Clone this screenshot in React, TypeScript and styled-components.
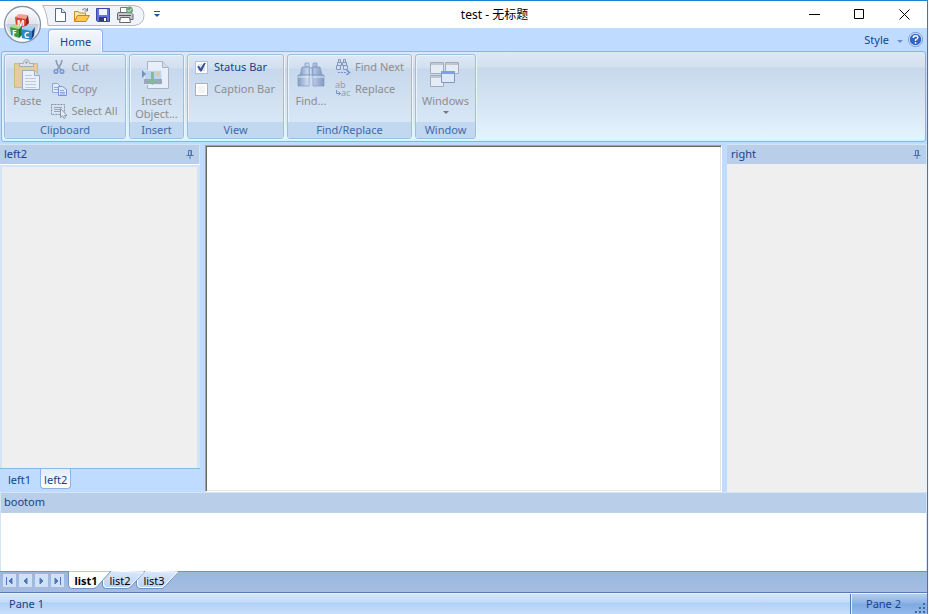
import React from "react";
import styled, { createGlobalStyle, css } from "styled-components";

const navy = "#15428b";
const sky = "#bfdbff";

const GlobalStyle = createGlobalStyle`
  * { box-sizing: border-box; }
  body { margin: 0; }
  body, button, input {
    font-family: "Noto Sans", "Open Sans", "Noto Sans CJK SC", sans-serif;
    font-size: 11px;
    line-height: 14px;
  }
  button { padding: 0; margin: 0; border: 0; background: none; color: inherit; }
  svg { display: block; flex: none; }
`;

const Desktop = styled.div`
  min-height: 100vh;
  display: flex;
  padding-right: 1px;
  background: #f4f7fb;
`;
const Window = styled.div`
  position: relative;
  flex: 1;
  min-width: 0;
  display: flex;
  flex-direction: column;
  border-top: 1px solid #1883d7;
  border-right: 1px solid #1883d7;
  background: ${sky};
  color: ${navy};
`;
const TitleBar = styled.header`
  height: 27px;
  display: grid;
  grid-template-columns: 1fr auto 1fr;
  align-items: center;
  background: #fff;
`;
const Title = styled.h1`
  margin: 0;
  padding-left: 62px;
  font-size: 12px;
  font-weight: 400;
  line-height: 26px;
  color: #000;
`;
const OfficeButton = styled.button`
  position: absolute;
  z-index: 2;
  left: 3px;
  top: 4px;
`;
const QuickAccess = styled.div`
  display: flex;
  align-items: center;
  align-self: start;
  gap: 7px;
  padding-left: 42px;
`;
const QuickBar = styled.div`
  position: relative;
  display: flex;
  align-items: center;
  gap: 5px;
  width: 104px;
  height: 24px;
  margin-top: 2px;
  padding-left: 10px;
`;
const BarShape = styled.svg`
  position: absolute;
  left: 0;
  top: 0;
`;
const IconButton = styled.button`
  position: relative;
  display: flex;
  align-items: center;
  justify-content: center;
`;
const WindowControls = styled.div`
  justify-self: end;
  display: flex;
`;
const WindowButton = styled.button`
  width: 45px;
  height: 27px;
  display: grid;
  place-items: center;
`;
const TabStrip = styled.nav`
  height: 23px;
  display: flex;
  align-items: end;
  justify-content: space-between;
  padding: 0 4px 0 48px;
`;
const RibbonTab = styled.button`
  position: relative;
  z-index: 1;
  height: 23px;
  margin-bottom: -1px;
  padding: 1px 11px 0;
  border: 1px solid #8db2e3;
  border-bottom: 0;
  border-radius: 4px 4px 0 0;
  background: linear-gradient(#f4f8fe, #dfe9f5);
  box-shadow: inset 1px 1px #fff, inset -1px 0 #fff;
  color: ${navy};
  font-size: 11px;
`;
const StyleArea = styled.div`
  display: flex;
  align-items: center;
  align-self: center;
  gap: 5px;
`;
const StyleButton = styled.button`
  display: flex;
  align-items: center;
  gap: 7px;
  color: ${navy};
`;
const Ribbon = styled.section`
  display: flex;
  gap: 3px;
  height: 91px;
  margin: 0 1px;
  padding: 2px 2px 2px;
  border: 1px solid #8db2e3;
  border-radius: 3px;
  background: linear-gradient(#dee8f5 0, #d3e0ef 15px, #c7d8ed 16px, #d8e7f5 58px, #e4f5ff 88px);
  box-shadow: inset 0 -2px #c9f8ff, inset 1px 0 #d9f3ff;
`;
const Group = styled.section`
  display: flex;
  flex-direction: column;
  flex: 0 0 auto;
  width: ${(p: { $w: number }) => p.$w}px;
  border: 1px solid #9ebfdb;
  border-radius: 3px;
  background: linear-gradient(#dee8f5 0, #d1dfef 13px, #c7d8ed 14px, #d8e7f5 68px);
  box-shadow: inset 1px 1px #eaf2fa, 1px 1px #eaf5fc;
  overflow: hidden;
`;
const GroupBody = styled.div<{ $gap?: number }>`
  display: flex;
  flex: 1;
  justify-content: center;
  gap: ${(p) => p.$gap ?? 0}px;
  padding-top: 1px;
`;
const GroupName = styled.h2`
  margin: 0;
  height: 16px;
  background: #c1d8f0;
  color: #3e6aaa;
  font-size: 11px;
  font-weight: 400;
  line-height: 16px;
  text-align: center;
`;
const LargeButton = styled.button`
  display: flex;
  flex-direction: column;
  align-items: center;
  padding-top: 3px;
  color: #8d8d8d;
  line-height: 13px;
  svg { margin-bottom: 3px; }
`;
const Stack = styled.div`
  display: flex;
  flex-direction: column;
`;
const SmallButton = styled.button`
  display: flex;
  align-items: center;
  gap: 4px;
  height: 22px;
  color: #8d8d8d;
  white-space: nowrap;
`;
const CheckLabel = styled.label<{ $off?: boolean }>`
  display: flex;
  align-items: center;
  gap: 6px;
  height: 22px;
  padding-right: 1px;
  color: ${(p) => (p.$off ? "#8d8d8d" : navy)};
`;
const CheckBox = styled.input`
  appearance: none;
  width: 13px;
  height: 13px;
  margin: 0;
  border: 1px solid #abc1de;
  background: #dfe3e9;
  box-shadow: inset 0 0 0 2px #fff;
  display: grid;
  place-items: center;
  &:disabled { border-color: #aeb1b5; background: #f4f4f4; }
  &:checked::before {
    content: "";
    width: 9px;
    height: 9px;
    background: #33558f;
    clip-path: polygon(0 45%, 22% 38%, 40% 65%, 80% 0, 100% 0, 50% 100%, 35% 100%);
  }
`;
const Workspace = styled.main`
  flex: 1;
  display: grid;
  grid-template-columns: 200px minmax(0, 1fr) 200px;
  column-gap: 5px;
  padding-top: 2px;
`;
const Pane = styled.section`
  display: flex;
  flex-direction: column;
  min-width: 0;
`;
const PaneHeader = styled.header`
  display: flex;
  align-items: center;
  justify-content: space-between;
  height: 20px;
  padding: 0 5px 1px 4px;
  border-top: 1px solid #d5e4f2;
  border-right: 1px solid #d5e4f2;
  background: #b8cee9;
`;
const BottomHeader = styled(PaneHeader)`
  height: 21px;
  padding: 0 3px 2px;
`;
const PaneName = styled.h2`
  margin: 0;
  font-size: 11px;
  font-weight: 400;
  line-height: 16px;
`;
const PaneBody = styled.div<{ $framed?: boolean }>`
  flex: 1;
  background: #efefef;
  ${(p) =>
    p.$framed &&
    css`
      border: solid #d5e4f2;
      border-width: 2px 2px 0 2px;
      margin-top: 1px;
      box-shadow: 0 -1px #fff, inset -1px 0 #d5e4f2;
    `}
`;
const PaneTabs = styled.nav`
  display: flex;
  height: 24px;
  padding: 0 4px;
  gap: 5px;
  border-top: 1px solid #8db9de;
`;
const PaneTab = styled.button<{ $active?: boolean }>`
  height: 20px;
  padding: 2px 4px 0;
  color: ${navy};
  ${(p) =>
    p.$active &&
    css`
      padding: 2px 3px 0;
      border: 1px solid #8db2e3;
      border-top: 0;
      border-radius: 0 0 4px 4px;
      background: linear-gradient(#e0edfb, #fff);
    `}
`;
const Client = styled.div`
  border: 1px solid;
  border-color: #a0a0a0 #fff #fff #a0a0a0;
  box-shadow: inset 1px 1px #696969, inset -1px -1px #e3e3e3;
  background: #fff;
  margin-top: 1px;
`;
const BottomPane = styled.section`
  border-left: 1px solid #d5e4f2;
`;
const Output = styled.div`
  height: 58px;
  background: #fff;
  border-right: 1px solid #d5e4f2;
`;
const SheetBar = styled.nav`
  display: flex;
  height: 22px;
  border-top: 1px solid #6f93c5;
  border-bottom: 1px solid #567db1;
  background: linear-gradient(#9bb7df, #a6bde0);
`;
const SheetNav = styled.div`
  display: flex;
  gap: 3px;
  padding: 2px 4px 0 3px;
`;
const NavButton = styled.button`
  display: grid;
  place-items: center;
  width: 13px;
  height: 13px;
  background: #cfe1f6;
`;
const SheetTab = styled.button<{ $order: number }>`
  position: relative;
  z-index: ${(p) => p.$order};
  width: 34px;
  height: 17px;
  padding-left: 2px;
  color: #000;
  font-weight: ${(p) => (p.$order === 3 ? 700 : 400)};
  line-height: 17px;
  white-space: nowrap;
`;
const SheetShape = styled.svg`
  position: absolute;
  left: 0;
  top: -1px;
`;
const SheetText = styled.span`
  position: relative;
`;
const StatusBar = styled.footer`
  position: relative;
  display: flex;
  height: 21px;
  border-top: 1px solid #e6f1ff;
  background: linear-gradient(#d7e6f9, #c4dbf8 8px, #b1cff7 9px, #c8dffb);
  line-height: 20px;
`;
const StatusText = styled.div`
  flex: 1;
  padding-left: 9px;
`;
const StatusEnd = styled.div`
  width: 77px;
  padding-left: 15px;
  border-left: 1px solid #567db1;
  box-shadow: inset 1px 0 #e1eefc;
  background: linear-gradient(#b4cdf0, #8db2e6 9px, #7fa9e2 10px, #94b9ec);
`;
const Grip = styled.svg`
  position: absolute;
  right: 0;
  bottom: 0;
`;

const Arrow = ({ fill = "#6b8fc5", bar = false }: { fill?: string; bar?: boolean }) => (
  <svg width="7" height="8" viewBox="0 0 7 8">
    {bar && <path d="M1 1.500h6" stroke={fill} />}
    <path d="M1 4h6L4 7z" fill={fill} />
  </svg>
);

const OfficeIcon = () => (
  <svg width="39" height="39" viewBox="0 0 39 39">
    <defs>
      <linearGradient id="orb" x2="0" y2="1">
        <stop stopColor="#fff" /><stop offset=".48" stopColor="#dfe4ec" />
        <stop offset=".5" stopColor="#c3ccd9" /><stop offset="1" stopColor="#fff" />
      </linearGradient>
    </defs>
    <circle cx="19.500" cy="19.500" r="18" fill="url(#orb)" stroke="#8694ac" strokeWidth="1.300" />
    <circle cx="19.500" cy="19.500" r="16.500" fill="none" stroke="#fff" strokeOpacity=".8" />
    <path d="M12 12l4-3 9 1-2 4z" fill="#f2a090" />
    <path d="M12 12l11 2-1 8-9-1z" fill="#d2452f" />
    <path d="M23 14l2-4 1 8-4 4z" fill="#94211a" />
    <path d="M7 22l4-3 8 2-3 3z" fill="#a9dd94" />
    <path d="M7 22l9 2v9l-8-3z" fill="#3c9c42" />
    <path d="M16 24l3-3v9l-3 3z" fill="#1c6f2b" />
    <path d="M18 24l4-3 10 1-3 4z" fill="#9bd2f4" />
    <path d="M18 24l11 2-1 9-9-2z" fill="#2d87c8" />
    <path d="M29 26l3-4-1 9-3 4z" fill="#153f86" />
    <g fill="#fff" fontFamily="Noto Sans" fontWeight="700" fontSize="8">
      <text x="14" y="21">M</text><text x="9" y="31">F</text><text x="21" y="33">C</text>
    </g>
  </svg>
);

const NewIcon = () => (
  <svg width="16" height="16" viewBox="0 0 16 16">
    <path d="M3.500 1.500h6l4 4v9h-10z" fill="#fff" stroke="#53698f" />
    <path d="M9.500 1.500v4h4" fill="#dce6f5" stroke="#53698f" />
  </svg>
);
const OpenIcon = () => (
  <svg width="17" height="16" viewBox="0 0 17 16">
    <path d="M1.500 14V4.500h4l1 1.500h6v3" fill="#ffe79b" stroke="#c88c2a" />
    <path d="M1.500 14.500l3-6h12l-3.500 6z" fill="#ffc951" stroke="#c4862a" />
    <path d="M9 3q3-3 5 0M14.500 1v3h-3" fill="none" stroke="#6b7c99" />
  </svg>
);
const SaveIcon = () => (
  <svg width="16" height="16" viewBox="0 0 16 16">
    <path d="M1.500 1.500h13v13h-12l-1-1z" fill="#6672dc" stroke="#3d45a5" />
    <path d="M4 2h8v6H4z" fill="#eef3ff" />
    <path d="M4 10h8v4H4z" fill="#34396f" />
    <path d="M9 11h2v3H9z" fill="#fff" />
  </svg>
);
const PrintIcon = () => (
  <svg width="18" height="18" viewBox="0 0 18 18">
    <path d="M4.500 7V1.500h8V7" fill="#fff" stroke="#777" />
    <path d="M2 6.500h13l2 2v5H1.500V8z" fill="#c4c6cb" stroke="#6b6b70" />
    <path d="M4.500 11.500h9l1 5h-11z" fill="#fff" stroke="#666" />
    <path d="M3 9.500h12" stroke="#55585e" />
    <circle cx="13.500" cy="4" r="3.500" fill="#69a57a" />
    <path d="M11.500 4l1.500 1.500 3-3" fill="none" stroke="#fff" />
  </svg>
);
const PasteIcon = () => (
  <svg width="30" height="32" viewBox="0 0 30 32">
    <path d="M2.500 4.500h23v24h-23z" fill="#e4cd9c" stroke="#cfb987" />
    <path d="M7.500 7.500v-3h4q0-4 3-4t3 4h4v3z" fill="#dce2e8" stroke="#a9adb2" />
    <circle cx="14.500" cy="3.500" r="1" fill="#7b8794" />
    <path d="M10.500 11.500h12l5 5v14h-17z" fill="#e9f0fa" stroke="#9caac0" />
    <path d="M22.500 11.500v5h5" fill="#d2deee" stroke="#9caac0" />
    <path d="M13 16.500h7M13 19.500h11M13 22.500h11M13 25.500h11M13 28.500h11" stroke="#bdc9dc" />
  </svg>
);
const CutIcon = () => (
  <svg width="16" height="16" viewBox="0 0 16 16" fill="none">
    <path d="M5 1l1 4 4 6M11 1l-1 4-4 6" stroke="#8d9cb3" strokeWidth="1.600" />
    <circle cx="5" cy="12.500" r="1.800" stroke="#7797cf" strokeWidth="1.500" />
    <circle cx="11" cy="12.500" r="1.800" stroke="#7797cf" strokeWidth="1.500" />
  </svg>
);
const CopyIcon = () => (
  <svg width="16" height="16" viewBox="0 0 16 16">
    <path d="M1.500 2.500h5l3 3v6h-8z" fill="#e1eafa" stroke="#8ea6d0" />
    <path d="M3 6.500h4M3 8.500h4" stroke="#93acd6" />
    <path d="M7.500 5.500h4l4 3v6h-8z" fill="#dfe9fb" stroke="#7595cf" />
    <path d="M9 9.500h4M9 11.500h5M9 13h5" stroke="#86a3da" />
  </svg>
);
const SelectIcon = () => (
  <svg width="16" height="16" viewBox="0 0 16 16">
    <path d="M.5 1.500h13v10H.500z" fill="none" stroke="#899099" strokeDasharray="2 1" />
    <path d="M3 4.500h8M3 6.500h6M3 8.500h6" stroke="#9ba3ae" />
    <path d="M9.500 5.500v9l2-2 1.500 3 1.500-1-1-2h2.500z" fill="#e7edf6" stroke="#8d99aa" />
  </svg>
);
const InsertIcon = () => (
  <svg width="32" height="32" viewBox="0 0 32 32">
    <path d="M6.500 2.500h15l6 6v21h-21z" fill="#e8eff8" stroke="#a9b4c2" />
    <path d="M21.500 2.500v6h6" fill="#d1dce9" stroke="#a9b4c2" />
    <path d="M3.500 11.500h17v14h-17z" fill="#bdd4f0" stroke="#dce7f4" />
    <path d="M3 20h18v5H3z" fill="#9aa8bb" />
    <circle cx="17" cy="15" r="2" fill="#dac99a" />
    <path d="M10 13h3v8h3l-4.500 5L7 21h3z" fill="#83b99c" />
    <path d="M1 11l4 4-4 4z" fill="#6e91cc" />
  </svg>
);
const Binoculars = () => (
  <svg width="32" height="32" viewBox="0 0 32 32">
    <defs>
      <linearGradient id="tube"><stop stopColor="#849cc4" /><stop offset=".4" stopColor="#d3e1f5" /><stop offset="1" stopColor="#8299c2" /></linearGradient>
    </defs>
    <g fill="url(#tube)" stroke="#8299c0" strokeWidth=".700">
      <path d="M10 4h4v4h-4zM18 4h4v4h-4zM7 8h8v8H5zM17 8h8l2 8H17z" />
      <path d="M3 16h11v11H3zM18 16h11v11H18z" />
      <path d="M14 9h4v7h-4z" />
    </g>
    <path d="M3 18h11M18 18h11" stroke="#dfeafa" />
  </svg>
);
const FindNextIcon = () => (
  <svg width="16" height="16" viewBox="0 0 16 16">
    <path d="M3.500.5h2v3h-2zM8.500.5h2v3h-2zM2.500 3.500h4v3h-4zM7.500 3.500h4v3h-4zM1.500 6.500h4v4h-4zM8.500 6.500h4v4h-4z" fill="#d2def0" stroke="#8498bf" />
    <path d="M3 13.500h9" stroke="#6f91cf" strokeDasharray="2 1" />
    <path d="M11.500 11l3 2.500-3 2.500" fill="none" stroke="#6f91cf" strokeWidth="1.500" />
  </svg>
);
const ReplaceIcon = () => (
  <svg width="16" height="16" viewBox="0 0 16 16" overflow="visible">
    <g fontFamily="Noto Sans" fontSize="9" fill="#929dac">
      <text x="0" y="7">ab</text><text x="6" y="15">a</text><text x="11" y="15" fill="#83b4a0">c</text>
    </g>
    <path d="M1.500 9v3.500h4M3.500 10.500l2 2-2 2" fill="none" stroke="#7893bd" />
  </svg>
);
const WindowsIcon = () => (
  <svg width="32" height="32" viewBox="0 0 32 32">
    <g fill="#e5ecf5" stroke="#a3adba">
      <path d="M1.500 3.500h13v11h-13zM16.500 3.500h13v11h-13zM1.500 16.500h13v11h-13z" />
    </g>
    <path d="M2 5h12M17 5h12M2 18h12" stroke="#bdc6d1" strokeWidth="2" />
    <path d="M12.500 12.500h13v11h-13z" fill="#dce8f8" stroke="#8198bd" />
    <path d="M12 13.500h14" stroke="#7da1e4" strokeWidth="3" />
  </svg>
);
const PinIcon = () => (
  <svg width="8" height="9" viewBox="0 0 8 9" fill="none" stroke="#4d74b0">
    <path d="M2.500 5V.5h3V5M.5 5.500h7M4 6v3M5 1v4" />
  </svg>
);
const HelpIcon = () => (
  <svg width="15" height="15" viewBox="0 0 15 15">
    <circle cx="7.500" cy="7.500" r="6.500" fill="#2c65cf" stroke="#e4edfb" strokeWidth="1.500" />
    <circle cx="7.500" cy="7.500" r="7" fill="none" stroke="#6180ae" strokeWidth=".800" />
    <path d="M5.300 6q0-2.300 2.300-2.300T9.800 5.700Q9.700 7 7.600 7.600V9M7.600 10v1.700" fill="none" stroke="#fff" strokeWidth="1.500" />
  </svg>
);
const navPaths = ["M2.500 2v8M8 3v6L5 6z", "M7 3v6L4 6z", "M4 3v6l3-3z", "M3 3v6l3-3zM8.500 2v8"];
const navNames = ["First", "Previous", "Next", "Last"];

const Sheet = ({ name, order }: { name: string; order: number }) => (
  <SheetTab $order={order}>
    <SheetShape width="46" height="18" viewBox="0 0 46 18">
      <defs>
        <linearGradient id="sheet" x2="0" y2="1"><stop stopColor="#d9e8fb" /><stop offset="1" stopColor="#b8d2f5" /></linearGradient>
      </defs>
      <path d="M.5 0v14q0 3 3 3.500H25q3 0 5-3L43 0z" fill={order === 3 ? "#fff" : "url(#sheet)"} stroke="#6f93c5" />
      {order < 3 && <path d="M1.500 0v13q0 3 3 3.500H25q2 0 4-2.500L41.500 1z" fill="none" stroke="#fff" />}
    </SheetShape>
    <SheetText>{name}</SheetText>
  </SheetTab>
);

export default function App() {
  return (
    <Desktop>
      <GlobalStyle />
      <Window>
        <OfficeButton aria-label="Application menu"><OfficeIcon /></OfficeButton>
        <TitleBar>
          <QuickAccess>
            <QuickBar>
              <BarShape width="104" height="24" viewBox="0 0 104 24">
                <path d="M.5 2.500H92q10 1 10 10t-10 10H6Q5 9 .5 2.500z" fill="#f0f3f7" stroke="#b2b9c4" />
              </BarShape>
              <IconButton aria-label="New"><NewIcon /></IconButton>
              <IconButton aria-label="Open"><OpenIcon /></IconButton>
              <IconButton aria-label="Save"><SaveIcon /></IconButton>
              <IconButton aria-label="Print"><PrintIcon /></IconButton>
            </QuickBar>
            <IconButton aria-label="Customize"><Arrow fill="#27509a" bar /></IconButton>
          </QuickAccess>
          <Title>test - 无标题</Title>
          <WindowControls>
            <WindowButton aria-label="Minimize"><svg width="11" height="11"><path d="M0 5.500h11" stroke="#000" /></svg></WindowButton>
            <WindowButton aria-label="Maximize"><svg width="11" height="11"><path d="M.5.5h9v9h-9z" fill="none" stroke="#000" /></svg></WindowButton>
            <WindowButton aria-label="Close"><svg width="11" height="11"><path d="M.5.5l10 10M10.500.5l-10 10" stroke="#000" /></svg></WindowButton>
          </WindowControls>
        </TitleBar>
        <TabStrip>
          <RibbonTab>Home</RibbonTab>
          <StyleArea>
            <StyleButton>Style <Arrow /></StyleButton>
            <IconButton aria-label="Help"><HelpIcon /></IconButton>
          </StyleArea>
        </TabStrip>
        <Ribbon>
          <Group $w={122}>
            <GroupBody $gap={9}>
              <LargeButton disabled><PasteIcon />Paste</LargeButton>
              <Stack>
                <SmallButton disabled><CutIcon />Cut</SmallButton>
                <SmallButton disabled><CopyIcon />Copy</SmallButton>
                <SmallButton disabled><SelectIcon />Select All</SmallButton>
              </Stack>
            </GroupBody>
            <GroupName>Clipboard</GroupName>
          </Group>
          <Group $w={55}>
            <GroupBody>
              <LargeButton disabled><InsertIcon />Insert<br />Object...</LargeButton>
            </GroupBody>
            <GroupName>Insert</GroupName>
          </Group>
          <Group $w={97}>
            <GroupBody>
              <Stack>
                <CheckLabel><CheckBox type="checkbox" defaultChecked />Status Bar</CheckLabel>
                <CheckLabel $off><CheckBox type="checkbox" disabled />Caption Bar</CheckLabel>
              </Stack>
            </GroupBody>
            <GroupName>View</GroupName>
          </Group>
          <Group $w={125}>
            <GroupBody $gap={8}>
              <LargeButton disabled><Binoculars />Find...</LargeButton>
              <Stack>
                <SmallButton disabled><FindNextIcon />Find Next</SmallButton>
                <SmallButton disabled><ReplaceIcon />Replace</SmallButton>
              </Stack>
            </GroupBody>
            <GroupName>Find/Replace</GroupName>
          </Group>
          <Group $w={61}>
            <GroupBody>
              <LargeButton disabled><WindowsIcon />Windows<Arrow fill="#777" /></LargeButton>
            </GroupBody>
            <GroupName>Window</GroupName>
          </Group>
        </Ribbon>
        <Workspace>
          <Pane>
            <PaneHeader><PaneName>left2</PaneName><IconButton aria-label="Pin left pane"><PinIcon /></IconButton></PaneHeader>
            <PaneBody $framed />
            <PaneTabs>
              <PaneTab>left1</PaneTab>
              <PaneTab $active>left2</PaneTab>
            </PaneTabs>
          </Pane>
          <Client />
          <Pane>
            <PaneHeader><PaneName>right</PaneName><IconButton aria-label="Pin right pane"><PinIcon /></IconButton></PaneHeader>
            <PaneBody />
          </Pane>
        </Workspace>
        <BottomPane>
          <BottomHeader><PaneName>bootom</PaneName></BottomHeader>
          <Output />
        </BottomPane>
        <SheetBar>
          <SheetNav>
            {navPaths.map((d, i) => (
              <NavButton key={d} aria-label={navNames[i]}>
                <svg width="11" height="12" viewBox="0 0 11 12"><path d={d} fill="#4c78b8" stroke="#4c78b8" /></svg>
              </NavButton>
            ))}
          </SheetNav>
          <Sheet name="list1" order={3} />
          <Sheet name="list2" order={2} />
          <Sheet name="list3" order={1} />
        </SheetBar>
        <StatusBar>
          <StatusText>Pane 1</StatusText>
          <StatusEnd>Pane 2</StatusEnd>
          <Grip width="12" height="12" viewBox="0 0 12 12">
            <path d="M8 1h2v2H8zM4 5h2v2H4zM8 5h2v2H8zM0 9h2v2H0zM4 9h2v2H4zM8 9h2v2H8z" fill="#456798" />
          </Grip>
        </StatusBar>
      </Window>
    </Desktop>
  );
}
